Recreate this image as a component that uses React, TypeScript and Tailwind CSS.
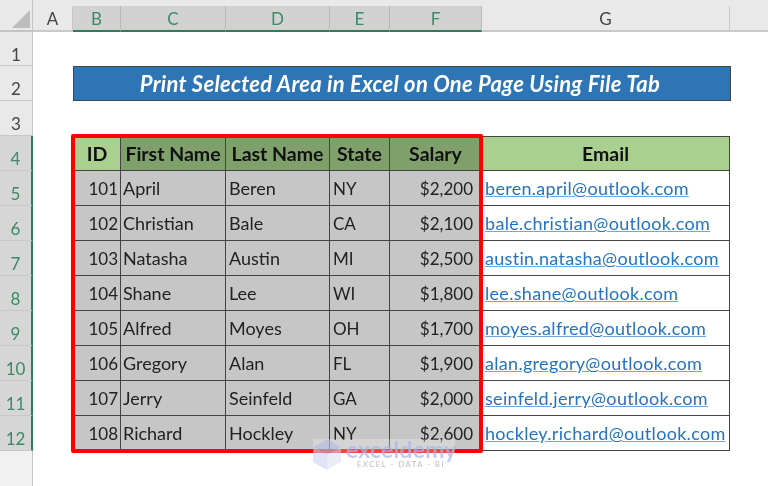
import React from "react";

// column widths, same order as the sheet letters
const columns = [
  { name: "A", w: "w-[40px]", sel: false },
  { name: "B", w: "w-[48px]", sel: true },
  { name: "C", w: "w-[105px]", sel: true },
  { name: "D", w: "w-[104px]", sel: true },
  { name: "E", w: "w-[60px]", sel: true },
  { name: "F", w: "w-[92px]", sel: true },
  { name: "G", w: "w-[248px]", sel: false },
];

const people = [
  ["101", "April", "Beren", "NY", "$2,200", "beren.april@outlook.com"],
  ["102", "Christian", "Bale", "CA", "$2,100", "bale.christian@outlook.com"],
  ["103", "Natasha", "Austin", "MI", "$2,500", "austin.natasha@outlook.com"],
  ["104", "Shane", "Lee", "WI", "$1,800", "lee.shane@outlook.com"],
  ["105", "Alfred", "Moyes", "OH", "$1,700", "moyes.alfred@outlook.com"],
  ["106", "Gregory", "Alan", "FL", "$1,900", "alan.gregory@outlook.com"],
  ["107", "Jerry", "Seinfeld", "GA", "$2,000", "seinfeld.jerry@outlook.com"],
  ["108", "Richard", "Hockley", "NY", "$2,600", "hockley.richard@outlook.com"],
];

function RowNum({ n, h }: { n: number; h: string }) {
  const sel = n >= 4;
  return (
    <div
      className={`${h} w-[33px] shrink-0 flex items-center justify-center pt-[11px] text-[17px] leading-none border-b border-[#c8c8c8] ${
        sel ? "bg-[#d6d6d6] text-[#3b8a68] border-r-2 border-r-[#2f7d55]" : "bg-[#e9e9e9] text-[#444] border-r border-r-[#c4c4c4]"
      }`}
    >
      {n}
    </div>
  );
}

function HeadCell({ w, children, light }: { w: string; children: React.ReactNode; light?: boolean }) {
  return (
    <div
      className={`${w} h-full flex items-center justify-center pt-[1px] font-bold text-[19.5px] text-[#111] border-r border-[#444] ${
        light ? "bg-[#a9d08e]" : "bg-[#7f9f6b]"
      }`}
    >
      {children}
    </div>
  );
}

export default function App() {
  return (
    <div className="w-[768px] h-[486px] overflow-hidden bg-white relative font-['Lato','Liberation_Sans',sans-serif]">
      <div className="blur-[0.4px]">
        {/* column letters */}
        <div className="flex h-[32px] bg-[#e9e9e9]">
          <div className="w-[33px] shrink-0 border-r border-b-2 border-[#c4c4c4] flex items-end justify-end pr-[2px] pb-[2px]">
            <svg width="18" height="18" viewBox="0 0 18 18">
              <polygon points="18,0 18,18 0,18" fill="#bdbdbd" />
            </svg>
          </div>
          {columns.map((c) => (
            <div key={c.name} className={`${c.w} shrink-0 pt-[6px]`}>
              <div
                className={`h-full flex items-center justify-center pt-[2px] text-[17px] border-r ${
                  c.sel
                    ? "bg-[#d2d2d2] text-[#3b8a68] border-[#b8b8b8] border-b-2 border-b-[#2f7d55]"
                    : "text-[#444] border-[#c8c8c8] border-b-2 border-b-[#c8c8c8]"
                }`}
              >
                {c.name}
              </div>
            </div>
          ))}
          <div className="flex-1 border-b-2 border-[#c8c8c8]" />
        </div>

        {/* rows 1-3 */}
        <div className="flex">
          <RowNum n={1} h="h-[34px]" />
        </div>
        <div className="flex">
          <RowNum n={2} h="h-[35px]" />
          <div className="ml-[40px] w-[658px] h-[35px] pr-[4px] bg-[#2e75b6] border border-[#444] flex items-center justify-center font-bold italic text-[22px] tracking-[0.27px] text-white">
            Print Selected Area in Excel on One Page Using File Tab
          </div>
        </div>
        <div className="flex">
          <RowNum n={3} h="h-[35px]" />
        </div>

        {/* table header */}
        <div className="flex">
          <RowNum n={4} h="h-[35px]" />
          <div className="ml-[40px] flex h-[35px] border-t border-b border-l border-[#444]">
            <HeadCell w="w-[47px]" light>ID</HeadCell>
            <HeadCell w="w-[105px]">First Name</HeadCell>
            <HeadCell w="w-[104px]">Last Name</HeadCell>
            <HeadCell w="w-[60px]">State</HeadCell>
            <HeadCell w="w-[92px]">Salary</HeadCell>
            <HeadCell w="w-[248px]" light>Email</HeadCell>
          </div>
        </div>

        {/* table body */}
        {people.map((p, i) => (
          <div className="flex" key={p[0]}>
            <RowNum n={i + 5} h="h-[35px]" />
            <div className="ml-[40px] flex h-[35px] border-b border-l border-[#444] text-[18px] text-[#222]">
              <div className="w-[47px] pt-[1px] text-[17px] bg-[#c6c6c6] border-r border-[#444] flex items-center justify-end pr-[2px]">{p[0]}</div>
              <div className="w-[105px] pt-[1px] bg-[#c6c6c6] border-r border-[#444] flex items-center pl-[2px]">{p[1]}</div>
              <div className="w-[104px] pt-[1px] bg-[#c6c6c6] border-r border-[#444] flex items-center pl-[3px]">{p[2]}</div>
              <div className="w-[60px] pt-[1px] text-[17px] bg-[#c6c6c6] border-r border-[#444] flex items-center pl-[3px]">{p[3]}</div>
              <div className="w-[92px] pt-[1px] text-[17px] bg-[#c6c6c6] border-r border-[#444] flex items-center justify-end pr-[8px]">{p[4]}</div>
              <div className="w-[248px] pt-[1px] tracking-[0.3px] border-r border-[#444] flex items-center pl-[3px] text-[#2474c4] underline decoration-[#6fa8e0]">{p[5]}</div>
            </div>
          </div>
        ))}
        <div className="absolute left-0 top-[451px] w-[33px] h-[35px] bg-[#f1f1f1] border-r border-[#c4c4c4]" />

        {/* selection outline */}
        <div className="absolute left-[71px] top-[134px] w-[412px] h-[319px] border-[4px] border-[#ff0000] rounded-[2px]" />
      </div>

      {/* watermark */}
      <div className="absolute left-[313px] top-[439px] w-[142px] h-[31px] bg-white/25 flex items-start gap-[5px]">
        <svg width="28" height="31" viewBox="0 0 28 31" className="shrink-0 opacity-50">
          <polygon points="14,0 28,8 28,23 14,31 0,23 0,8" fill="#d5dcf2" />
          <polygon points="14,0 28,8 14,16 0,8" fill="#a9b6e2" />
          <polygon points="0,8 14,16 14,31 0,23" fill="#c3cdee" />
        </svg>
        <div className="flex flex-col">
          <span className="block h-[21px] text-[23px] leading-[21px] font-bold tracking-[0.2px] text-[#aab6e6]/70">exceldemy</span>
          <span className="block h-[9px] pl-[11px] text-[7.5px] leading-[9px] tracking-[1.6px] text-[#bbb]">EXCEL - DATA - BI</span>
        </div>
      </div>
    </div>
  );
}
